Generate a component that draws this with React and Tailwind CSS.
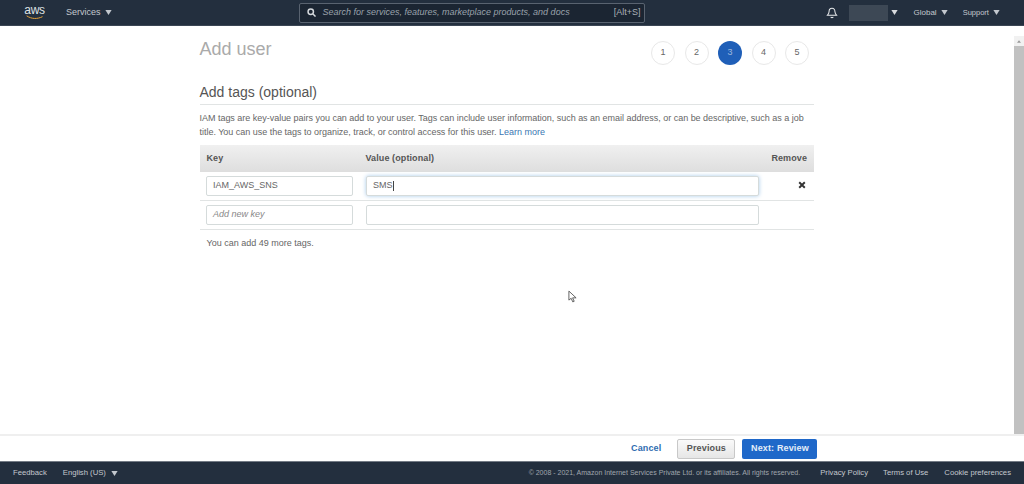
const Tri = ({ className = "" }) => (
  <svg viewBox="0 0 10 8" className={`w-[7px] h-[5px] ${className}`} fill="currentColor"><path d="M0 0h10L5 8z" /></svg>
);

const Step = ({ n, active }) => (
  <div className={`w-[24px] h-[24px] rounded-full flex items-center justify-center text-[9px] ${active ? "bg-[#1f5fb8] text-[#9fb9dd]" : "bg-white border border-[#e8e8e8] text-[#666]"}`}>{n}</div>
);

const Input = ({ className = "", children }) => (
  <div className={`h-[20px] border border-[#d5dbdb] rounded-[2px] bg-white flex items-center px-[6px] text-[9px] text-[#666] ${className}`}>{children}</div>
);

export default function App() {
  return (
    <div className="relative w-[1024px] h-[484px] overflow-hidden flex flex-col bg-white font-['Liberation_Sans',Arial,sans-serif]">
      <header className="h-[26px] shrink-0 bg-[#232f3e] border-b border-[#3b4654] flex items-center text-[9px] text-[#c3c8ce]">
        <div className="ml-[23px] w-[23px] flex flex-col items-center">
          <span className="text-[12px] leading-[9px] text-[#dfe2e5] tracking-[-0.3px]">aws</span>
          <svg viewBox="0 0 24 6" className="w-[22px] h-[5px]"><path d="M2 1c6 4 13 4 19 1" stroke="#e8a33a" strokeWidth="1.2" fill="none" /></svg>
        </div>
        <span className="ml-[20px]">Services</span>
        <Tri className="ml-[4px]" />
        <div className="ml-[187px] w-[346px] h-[20px] bg-[#1b2532] border border-[#596370] rounded-[2px] flex items-center text-[9px]">
          <svg viewBox="0 0 12 12" className="ml-[7px] w-[9px] h-[9px]" fill="none" stroke="#d5d9dd" strokeWidth="2"><circle cx="5" cy="5" r="3.6" /><path d="M8 8l3.4 3.4" /></svg>
          <span className="ml-[7px] italic text-[#9aa2ab]">Search for services, features, marketplace products, and docs</span>
          <span className="ml-auto mr-[3px] text-[#aab0b7]">[Alt+S]</span>
        </div>
        <svg viewBox="0 0 14 14" className="ml-[181px] w-[12px] h-[12px]" fill="none" stroke="#e8eaec" strokeWidth="1.2"><path d="M7 1.5c-2.4 0-3.4 1.8-3.4 3.8 0 2-1 3.2-2 4.4h10.8c-1-1.2-2-2.4-2-4.4 0-2-1-3.8-3.4-3.8z" /><path d="M5.5 11.5c.4 1.2 2.6 1.2 3 0" /></svg>
        <div className="ml-[11px] w-[39px] h-[16px] bg-[#3d4855]" />
        <Tri className="ml-[3px] text-[#d8dbde]" />
        <span className="ml-[16px] text-[8px]">Global</span>
        <Tri className="ml-[4px]" />
        <span className="ml-[15px] text-[7.5px]">Support</span>
        <Tri className="ml-[4px]" />
      </header>

      <div className="flex-1 flex min-h-0">
        <main className="flex-1 pl-[199.5px] pr-[200px]">
          <div className="flex items-start">
            <h1 className="mt-[12px] text-[18px] leading-[22px] text-[#aaa]">Add user</h1>
            <div className="ml-auto mt-[15px] mr-[5px] flex gap-[9.5px]">
              <Step n="1" /><Step n="2" /><Step n="3" active /><Step n="4" /><Step n="5" />
            </div>
          </div>
          <h2 className="mt-[18px] text-[14px] leading-[18px] text-[#555] pb-[3px] border-b border-[#e1e4e4]">Add tags (optional)</h2>
          <p className="mt-[6px] text-[9px] leading-[14px] text-[#666] tracking-[-0.02px]">
            IAM tags are key-value pairs you can add to your user. Tags can include user information, such as an email address, or can be descriptive, such as a job title. You can use the tags to organize, track, or control access for this user. <span className="text-[#3a76b2]">Learn more</span>
          </p>
          <div className="mt-[6px] h-[27px] bg-gradient-to-b from-[#f0f0f0] to-[#dedede] flex items-center text-[9px] font-bold text-[#555] tracking-[0.1px] px-[7px]">
            <span className="w-[159px]">Key</span>
            <span>Value (optional)</span>
            <span className="ml-auto">Remove</span>
          </div>
          <div className="h-[29px] border-b border-[#e1e4e4] flex items-center pl-[6.5px]">
            <Input className="w-[147px]">IAM_AWS_SNS</Input>
            <Input className="ml-[13px] w-[393px] border-[#4f86c0] shadow-[0_0_4px_#a9cbea]">SMS<span className="w-px h-[10px] bg-[#444]" /></Input>
            <svg viewBox="0 0 10 10" className="ml-[39px] -mt-[2px] w-[8px] h-[8px]" stroke="#333" strokeWidth="2.4"><path d="M1.5 1.5l7 7M8.5 1.5l-7 7" /></svg>
          </div>
          <div className="h-[29px] border-b border-[#e1e4e4] flex items-center pl-[6.5px]">
            <Input className="w-[147px] italic text-[#888]">Add new key</Input>
            <Input className="ml-[13px] w-[393px]" />
          </div>
          <p className="mt-[7px] pl-[7px] text-[9px] leading-[12px] text-[#666]">You can add 49 more tags.</p>
        </main>
        <div className="w-[10px] mt-[10px] bg-[#f1f1f1] flex flex-col">
          <div className="h-[10px] flex items-center justify-center"><svg viewBox="0 0 8 5" className="w-[4px] h-[3px]" fill="#999"><path d="M4 0l4 5H0z" /></svg></div>
          <div className="flex-1 bg-[#c1c1c1]" />
        </div>
      </div>

      <div className="h-[27px] shrink-0 bg-white border-t-2 border-[#efefef] flex items-center text-[9px] font-bold pl-[631px] tracking-[0.15px]">
        <span className="text-[#2f6cb0]">Cancel</span>
        <div className="ml-[16px] w-[58px] h-[20px] rounded-[2px] border border-[#c8c8c8] bg-gradient-to-b from-[#fafafa] to-[#e6e6e6] flex items-center justify-center text-[#555]">Previous</div>
        <div className="ml-[7px] w-[75px] h-[20px] rounded-[2px] bg-[#1f68c9] flex items-center justify-center text-[#e4edf8]">Next: Review</div>
      </div>

      <footer className="h-[23px] shrink-0 bg-[#232f3e] border-t border-[#737b85] flex items-center text-[7.7px] text-[#c3c8ce]">
        <span className="ml-[13px]">Feedback</span>
        <span className="ml-[16px]">English (US)</span>
        <Tri className="ml-[5px]" />
        <span className="ml-auto text-[7px] text-[#a0a6ad]">© 2008 - 2021, Amazon Internet Services Private Ltd. or its affiliates. All rights reserved.</span>
        <span className="ml-[20px]">Privacy Policy</span>
        <span className="ml-[15px]">Terms of Use</span>
        <span className="ml-[16px] mr-[13px]">Cookie preferences</span>
      </footer>

      <svg viewBox="0 0 10 14" className="absolute left-[568px] top-[290px] w-[9px] h-[13px]" fill="#fff" stroke="#555" strokeWidth="1"><path d="M1 1v10l2.5-2 1.8 4 1.6-.7-1.8-3.8H9z" /></svg>
    </div>
  );
}
